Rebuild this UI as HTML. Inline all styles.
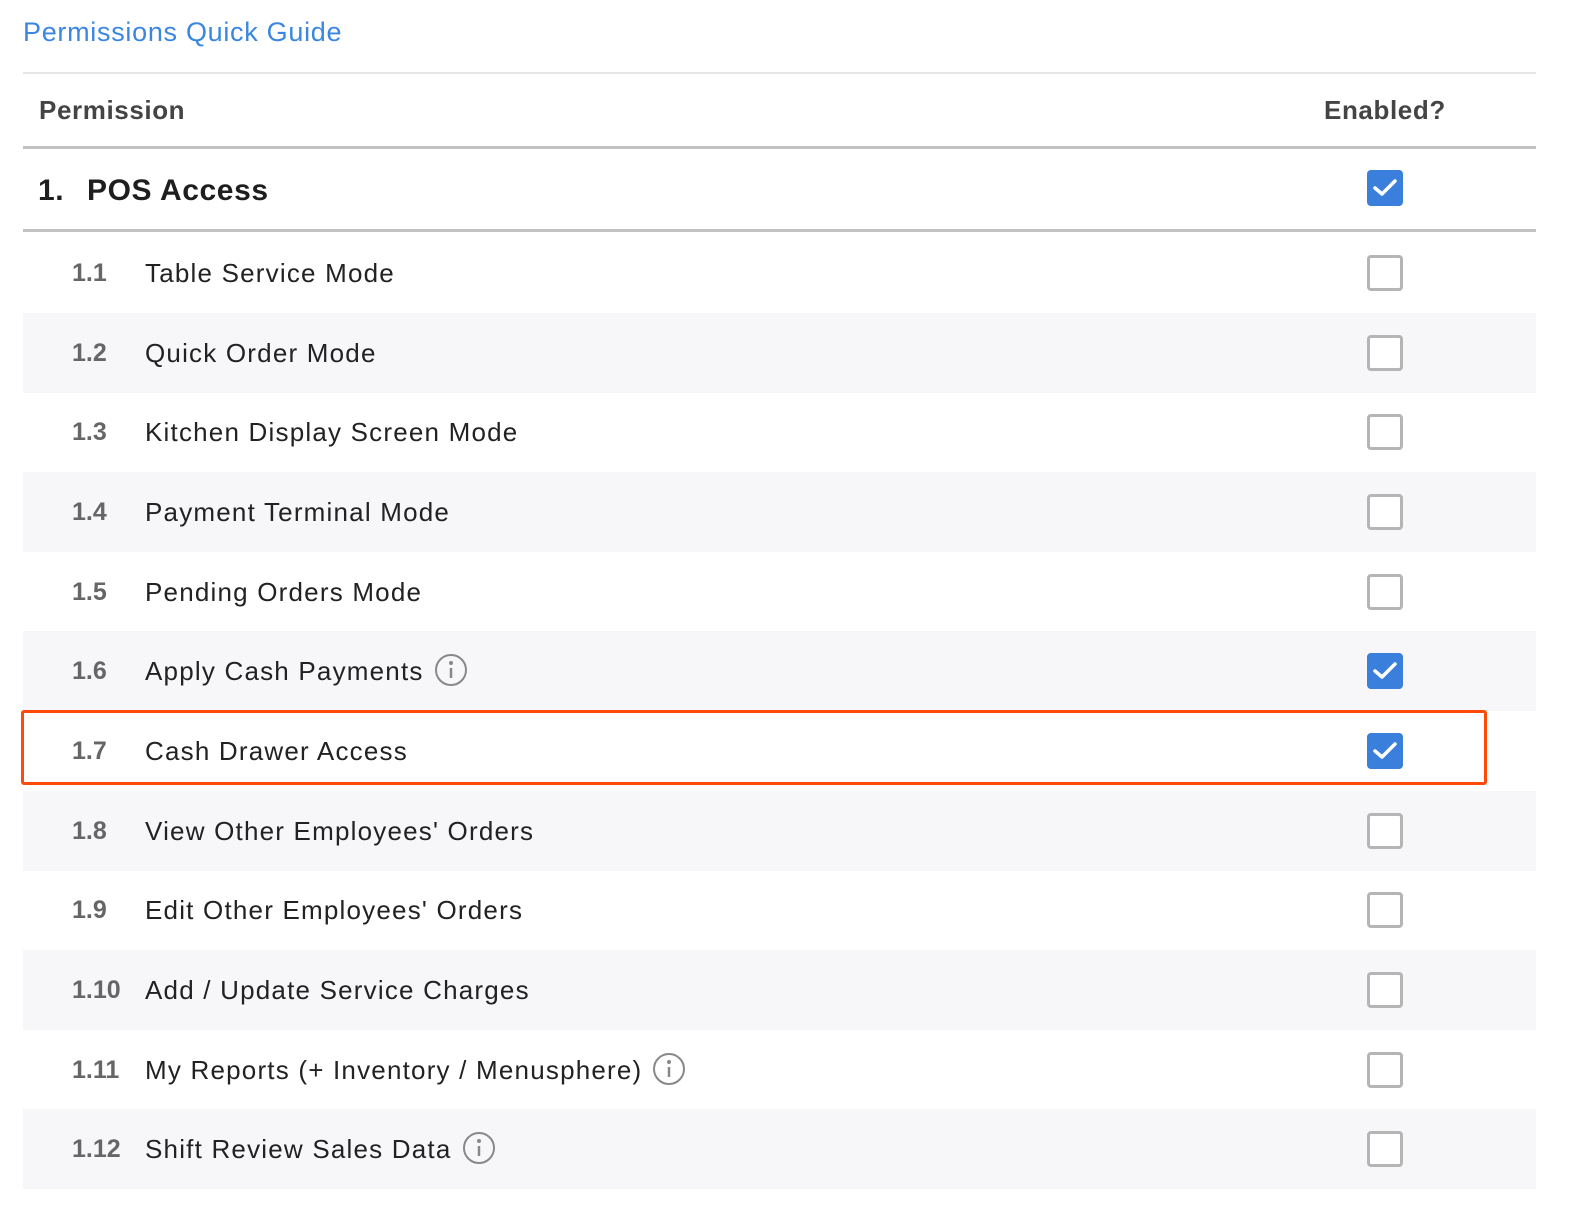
<!DOCTYPE html>
<html><head><meta charset="utf-8"><style>
body{margin:0;background:#fff;width:1575px;height:1208px;overflow:hidden;font-family:"Liberation Sans",sans-serif;position:relative}
.t{position:absolute;left:23px;top:17px;font-size:27px;color:#3a86e0;letter-spacing:0.7px}
.l1{position:absolute;left:23px;width:1513px;top:72px;height:2px;background:#e6e6e6}
.hd{position:absolute;top:95px;font-size:26px;font-weight:bold;color:#444;letter-spacing:0.6px}
.l3{position:absolute;left:23px;width:1513px;height:3px;background:#c2c2c4}
.sec{position:absolute;top:174px;font-size:30px;font-weight:bold;color:#1e1e1e;letter-spacing:0.6px}
.row{position:absolute;left:23px;width:1513px;height:80px}
.row.g{background:#f7f7f9}
.n{position:absolute;left:49px;top:26px;font-size:25px;font-weight:bold;color:#666}
.lb{position:absolute;left:122px;top:25px;font-size:26px;color:#222;letter-spacing:1.2px;white-space:nowrap}
.cb{position:absolute;left:1344px;top:22px;width:30px;height:30px;border:3px solid #b5b5b5;border-radius:4px;background:#fff}
.cb.on{background:#3a7fdc;border-color:#3a7fdc}
.cb svg{position:absolute;left:0;top:0}
.i{display:inline-block;vertical-align:middle;margin-left:10px;margin-top:-6px}
.red{position:absolute;left:21px;top:710px;width:1460px;height:69px;border:3px solid #ff4a0a;border-radius:3px}
</style></head><body>
<div class="t">Permissions Quick Guide</div>
<div class="l1"></div>
<div class="hd" style="left:39px">Permission</div>
<div class="hd" style="left:1324px">Enabled?</div>
<div class="l3" style="top:146px"></div>
<div class="sec" style="left:38px">1.</div>
<div class="sec" style="left:87px">POS Access</div>
<div class="row" style="top:149px;height:80px;background:transparent"><div class="cb on" style="top:21px"><svg width="30" height="30"><path d="M5 15 L12 21 L25 8" fill="none" stroke="#fff" stroke-width="3.5" stroke-linecap="round" stroke-linejoin="round"/></svg></div></div>
<div class="l3" style="top:229px"></div>

<div class="row" style="top:233px"><div class="n">1.1</div><div class="lb">Table Service Mode</div><div class="cb"></div></div>
<div class="row g" style="top:313px"><div class="n">1.2</div><div class="lb">Quick Order Mode</div><div class="cb"></div></div>
<div class="row" style="top:392px"><div class="n">1.3</div><div class="lb">Kitchen Display Screen Mode</div><div class="cb"></div></div>
<div class="row g" style="top:472px"><div class="n">1.4</div><div class="lb">Payment Terminal Mode</div><div class="cb"></div></div>
<div class="row" style="top:552px"><div class="n">1.5</div><div class="lb">Pending Orders Mode</div><div class="cb"></div></div>
<div class="row g" style="top:631px"><div class="n">1.6</div><div class="lb">Apply Cash Payments<svg class="i" width="34" height="34"><circle cx="17" cy="17" r="15" fill="none" stroke="#888" stroke-width="2"/><circle cx="17" cy="10" r="2" fill="#888"/><path d="M17 15 V25" stroke="#888" stroke-width="2.5"/></svg></div><div class="cb on"><svg width="30" height="30"><path d="M5 15 L12 21 L25 8" fill="none" stroke="#fff" stroke-width="3.5" stroke-linecap="round" stroke-linejoin="round"/></svg></div></div>
<div class="row" style="top:711px"><div class="n">1.7</div><div class="lb">Cash Drawer Access</div><div class="cb on"><svg width="30" height="30"><path d="M5 15 L12 21 L25 8" fill="none" stroke="#fff" stroke-width="3.5" stroke-linecap="round" stroke-linejoin="round"/></svg></div></div>
<div class="row g" style="top:791px"><div class="n">1.8</div><div class="lb">View Other Employees' Orders</div><div class="cb"></div></div>
<div class="row" style="top:870px"><div class="n">1.9</div><div class="lb">Edit Other Employees' Orders</div><div class="cb"></div></div>
<div class="row g" style="top:950px"><div class="n">1.10</div><div class="lb">Add / Update Service Charges</div><div class="cb"></div></div>
<div class="row" style="top:1030px"><div class="n">1.11</div><div class="lb">My Reports (+ Inventory / Menusphere)<svg class="i" width="34" height="34"><circle cx="17" cy="17" r="15" fill="none" stroke="#888" stroke-width="2"/><circle cx="17" cy="10" r="2" fill="#888"/><path d="M17 15 V25" stroke="#888" stroke-width="2.5"/></svg></div><div class="cb"></div></div>
<div class="row g" style="top:1109px"><div class="n">1.12</div><div class="lb">Shift Review Sales Data<svg class="i" width="34" height="34"><circle cx="17" cy="17" r="15" fill="none" stroke="#888" stroke-width="2"/><circle cx="17" cy="10" r="2" fill="#888"/><path d="M17 15 V25" stroke="#888" stroke-width="2.5"/></svg></div><div class="cb"></div></div>
<div class="red"></div>
</body></html>
